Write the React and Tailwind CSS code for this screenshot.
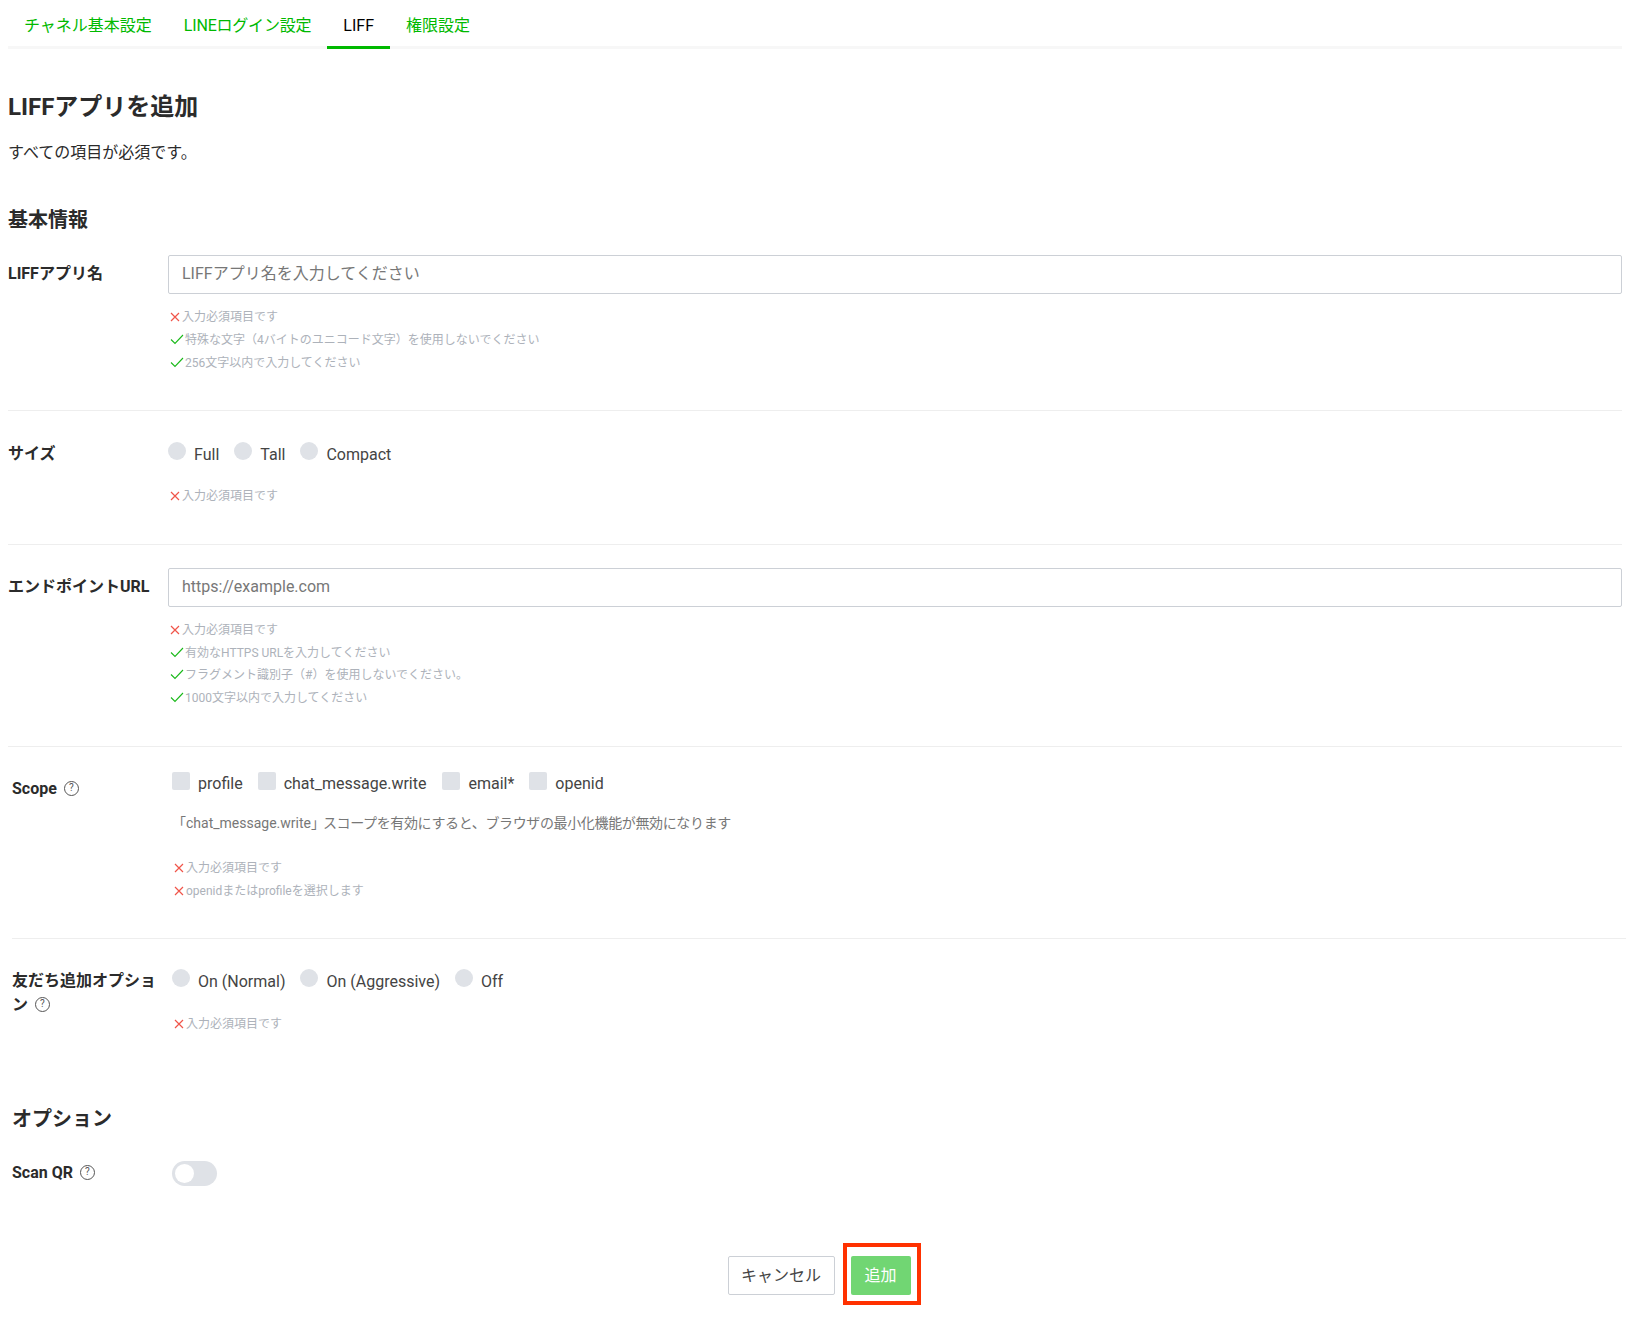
import React from 'react';

const font = 'font-[Roboto,"Noto_Sans_CJK_JP",sans-serif]';

function Cross() {
    return (
        <svg width="12" height="12" viewBox="0 0 12 12" className="shrink-0 ml-px">
            <path d="M2 2L10 10M10 2L2 10" stroke="#f0554a" strokeWidth="1.2" fill="none" />
        </svg>
    );
}

function Check() {
    return (
        <svg width="14" height="12" viewBox="0 0 14 12" className="shrink-0 ml-0.5 -mt-0.5">
            <path d="M1 6.5L5 10.5L13 2" stroke="#19b919" strokeWidth="1.1" fill="none" />
        </svg>
    );
}

function Messages({ items, className, tight = false }) {
    return (
        <ul className={className}>
            {items.map(([ok, text]) => (
                <li key={text} className={`flex items-center gap-px text-xs text-[#adb2ba] ${tight ? 'h-[22.5px]' : 'h-[23px]'}`}>
                    {ok ? <Check /> : <Cross />}
                    <span>{text}</span>
                </li>
            ))}
        </ul>
    );
}

function Help() {
    return (
        <span className="inline-flex items-center justify-center ml-[3px] w-[15px] h-[15px] border border-[#555] rounded-full text-[10px] leading-none font-normal text-[#555] align-[3px]">
            ?
        </span>
    );
}

function Radio({ label }) {
    return (
        <label className="flex items-start h-6">
            <span className="w-[18px] h-[18px] mt-[1px] rounded-full bg-[#dfe2e7]" />
            <span className="ml-[8px] mt-[2px] text-[#444]">{label}</span>
        </label>
    );
}

function Box({ label, className = '' }) {
    return (
        <label className={`flex items-start h-6 ${className}`}>
            <span className="w-[18px] h-[18px] mt-[1px] rounded-[2px] bg-[#dfe2e7]" />
            <span className="ml-[8px] mt-[1px] text-[#444]">{label}</span>
        </label>
    );
}

function TextInput({ placeholder }) {
    return (
        <input
            readOnly
            placeholder={placeholder}
            className="w-full h-[39px] pl-[13px] pr-3 pb-[3px] border border-[#ccd0d6] rounded-[2px] text-base outline-none placeholder:text-[#777]"
        />
    );
}

export default function App() {
    const required = [[false, '入力必須項目です']];

    return (
        <div className={`${font} w-[1650px] h-[1321px] bg-white text-[#2b2b2b] text-base`}>
            <div className="ml-2 mr-[28px]">
                <nav className="flex h-[49px] border-b-[3px] border-[#f7f7f7]">
                    <a className="px-4 pt-[14px] text-[#00b900]">チャネル基本設定</a>
                    <a className="px-4 pt-[14px] text-[#00b900] tracking-[-0.2px]">LINEログイン設定</a>
                    <a className="px-4 pt-[14px] h-[49px] border-b-[3px] border-[#00b900] text-black">LIFF</a>
                    <a className="px-4 pt-[14px] text-[#00b900]">権限設定</a>
                </nav>

                <h1 className="mt-[42px] text-2xl leading-8 font-bold">LIFFアプリを追加</h1>
                <p className="mt-[18px] leading-6">すべての項目が必須です。</p>
                <h2 className="mt-[41px] text-xl leading-7 font-bold">基本情報</h2>

                <div className="flex mt-[21px] pb-9 border-b border-[#eeeeee]">
                    <div className="w-40 pt-[7px] leading-6 font-bold">LIFFアプリ名</div>
                    <div className="flex-1">
                        <TextInput placeholder="LIFFアプリ名を入力してください" />
                        <Messages
                            className="mt-[11px]"
                            items={[
                                [false, '入力必須項目です'],
                                [true, '特殊な文字（4バイトのユニコード文字）を使用しないでください'],
                                [true, '256文字以内で入力してください'],
                            ]}
                        />
                    </div>
                </div>

                <div className="flex pt-[30px] pb-[37px] border-b border-[#eeeeee]">
                    <div className="w-40 pt-px leading-6 font-bold">サイズ</div>
                    <div className="flex-1">
                        <div className="flex gap-[15px]">
                            <Radio label="Full" />
                            <Radio label="Tall" />
                            <Radio label="Compact" />
                        </div>
                        <Messages className="mt-[19px]" items={required} />
                    </div>
                </div>

                <div className="flex pt-[23px] pb-[37px] border-b border-[#eeeeee]">
                    <div className="w-40 pt-[7px] leading-6 font-bold">エンドポイントURL</div>
                    <div className="flex-1">
                        <TextInput placeholder="https://example.com" />
                        <Messages
                            className="mt-3"
                            tight
                            items={[
                                [false, '入力必須項目です'],
                                [true, '有効なHTTPS URLを入力してください'],
                                [true, 'フラグメント識別子（#）を使用しないでください。'],
                                [true, '1000文字以内で入力してください'],
                            ]}
                        />
                    </div>
                </div>
            </div>

            <div className="ml-3 mr-6">
                <div className="flex pt-6 pb-9 border-b border-[#eeeeee]">
                    <div className="w-40 pt-1.5 leading-6 font-bold">
                        Scope <Help />
                    </div>
                    <div className="flex-1">
                        <div className="flex">
                            <Box label="profile" className="mr-[15px]" />
                            <Box label="chat_message.write" className="mr-4" />
                            <Box label="email*" className="mr-[15px]" />
                            <Box label="openid" />
                        </div>
                        <p className="mt-[18px] text-sm leading-5 text-[#777]">
                            「chat_message.write」<span className="-ml-[2px] tracking-[-0.36px]">スコープを有効にすると、ブラウザの最小化機能が無効になります</span>
                        </p>
                        <Messages
                            className="mt-[23px]"
                            items={[
                                [false, '入力必須項目です'],
                                [false, 'openidまたはprofileを選択します'],
                            ]}
                        />
                    </div>
                </div>

                <div className="flex pt-[30px]">
                    <div className="w-40 pr-2 leading-6 font-bold">
                        友だち追加オプション <Help />
                    </div>
                    <div className="flex-1">
                        <div className="flex gap-[15px] -mt-px">
                            <Radio label="On (Normal)" />
                            <Radio label="On (Aggressive)" />
                            <Radio label="Off" />
                        </div>
                        <Messages className="mt-5" items={required} />
                    </div>
                </div>

                <h2 className="mt-[70px] text-xl leading-7 font-bold">オプション</h2>

                <div className="flex items-center mt-7">
                    <div className="w-40 pb-px leading-6 font-bold">
                        Scan QR <Help />
                    </div>
                    <div className="w-[45px] h-[25px] p-[3px] rounded-full bg-[#dfe2e7]">
                        <div className="w-[19px] h-[19px] rounded-full bg-white" />
                    </div>
                </div>

                <div className="flex justify-center gap-4 mt-[70px]">
                    <button className="w-[107px] h-[39px] border border-[#ccd0d6] rounded-[2px] text-[#444]">キャンセル</button>
                    <div className="relative">
                        <button className="w-[60px] h-[39px] rounded-[2px] bg-[#71d673] text-white">追加</button>
                        <div className="absolute -left-2 -right-[10px] -top-[13px] -bottom-[10px] border-4 border-[#ff3100]" />
                    </div>
                </div>
            </div>
        </div>
    );
}
